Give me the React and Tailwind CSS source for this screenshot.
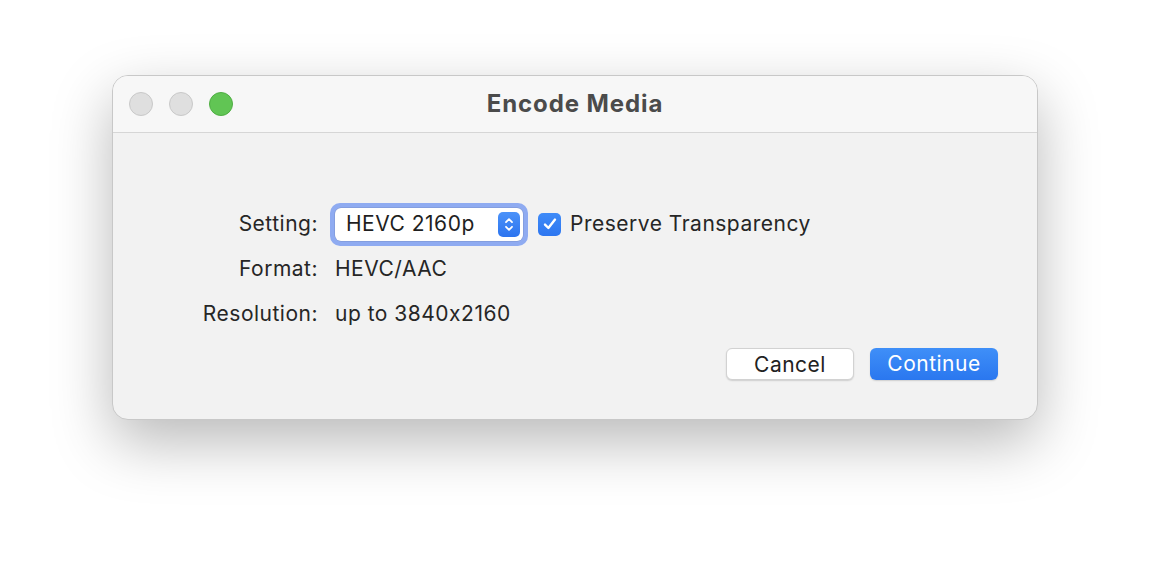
import React from "react";

const font = { fontFamily: "Inter, 'Noto Sans', sans-serif", fontFeatureSettings: "'calt' 0" };

const TrafficLights = () => (
  <div className="flex items-center gap-[16px] pl-[16px]">
    <span className="block h-[24px] w-[24px] rounded-full border border-[#c9c9c9] bg-[#dfdfdf]" />
    <span className="block h-[24px] w-[24px] rounded-full border border-[#c9c9c9] bg-[#dfdfdf]" />
    <span className="block h-[24px] w-[24px] rounded-full border border-[#4fae43] bg-[#61c554]" />
  </div>
);

const Stepper = () => (
  <span className="flex h-[25px] w-[22px] items-center justify-center rounded-[5px] bg-gradient-to-b from-[#4b92f9] to-[#2c74ef]">
    <svg width="12" height="17" viewBox="0 0 12 17" fill="none" stroke="white" strokeWidth="1.8" strokeLinecap="round" strokeLinejoin="round">
      <path d="M3 6.2 L6 3.2 L9 6.2" />
      <path d="M3 10.8 L6 13.8 L9 10.8" />
    </svg>
  </span>
);

const Checkbox = () => (
  <span className="flex h-[23px] w-[23px] items-center justify-center rounded-[5px] bg-gradient-to-b from-[#3f8bf8] to-[#2d76f0]">
    <svg width="16" height="16" viewBox="0 0 16 16" fill="none" stroke="white" strokeWidth="2.4" strokeLinecap="round" strokeLinejoin="round">
      <path d="M3 8.6 L6.4 12 L13 3.6" />
    </svg>
  </span>
);

export default function App() {
  return (
    <div className="min-h-[568px] w-[1150px] bg-white pl-[112px] pt-[75px]" style={font}>
      <div className="flex h-[345px] w-[926px] flex-col overflow-hidden rounded-[16px] border border-[#c8c8c8] bg-[#f2f2f2] shadow-[0_22px_60px_rgba(0,0,0,0.28)]">
        {/* title bar */}
        <div className="relative flex h-[57px] shrink-0 items-center border-b border-[#d6d6d6] bg-[#f7f7f7]">
          <TrafficLights />
          <div className="absolute inset-0 flex items-center justify-center text-[24px] font-bold tracking-[0.9px] text-[#4b4b4b]">
            Encode Media
          </div>
        </div>

        {/* body */}
        <div className="flex flex-col pt-[69px] text-[21px] tracking-[0.5px] text-[#262626]">
          <div className="grid grid-cols-[205px_1fr] gap-x-[17px]">
            <div className="flex h-[44px] items-center justify-end">Setting:</div>
            <div className="flex h-[44px] items-center gap-[10px] -ml-[5px]">
              <div className="rounded-[10px] bg-[#8fabf1] p-[5px]">
                <div className="flex h-[33px] w-[188px] items-center justify-between rounded-[6px] bg-white pl-[11px] pr-[3px] shadow-[0_0_0_0.5px_rgba(0,0,0,0.15)]">
                  <span className="text-[#1f1f1f]">HEVC 2160p</span>
                  <Stepper />
                </div>
              </div>
              <div className="flex items-center gap-[9px]">
                <Checkbox />
                <span>Preserve Transparency</span>
              </div>
            </div>

            <div className="flex h-[46px] items-center justify-end">Format:</div>
            <div className="flex h-[46px] items-center">HEVC/AAC</div>

            <div className="flex h-[44px] items-center justify-end">Resolution:</div>
            <div className="flex h-[44px] items-center">up to 3840x2160</div>
          </div>

          <div className="mt-[12px] flex justify-end gap-[16px] pr-[39px]">
            <button className="h-[32px] w-[128px] rounded-[6px] border border-[#d2d2d2] bg-white text-[21px] tracking-[0.5px] text-[#222] shadow-[0_1px_1.5px_rgba(0,0,0,0.15)]">
              Cancel
            </button>
            <button className="h-[32px] w-[128px] rounded-[6px] bg-gradient-to-b from-[#3f8ff8] to-[#2a77ef] text-[21px] tracking-[0.5px] text-white shadow-[0_1px_1.5px_rgba(0,0,0,0.15)]">
              Continue
            </button>
          </div>
        </div>
      </div>
    </div>
  );
}
